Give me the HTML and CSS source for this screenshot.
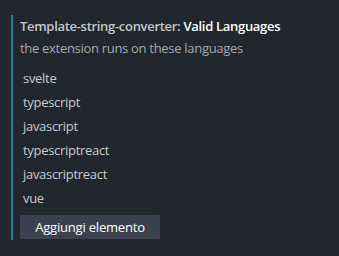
FILE: index.html
```html
<!DOCTYPE html>
<html lang="it">
<head>
  <meta charset="UTF-8">
  <meta name="viewport" content="width=device-width, initial-scale=1.0">
  <title>Settings</title>
  <link rel="stylesheet" href="styles.css">
</head>
<body>
  <div class="setting-item">
    <div class="setting-title">
      <span class="category">Template-string-converter: </span><span class="label">Valid Languages</span>
    </div>
    <div class="setting-description">the extension runs on these languages</div>

    <ul class="list">
      <li>svelte</li>
      <li>typescript</li>
      <li>javascript</li>
      <li>typescriptreact</li>
      <li>javascriptreact</li>
      <li>vue</li>
    </ul>

    <button type="button" class="add-button">Aggiungi elemento</button>
  </div>
</body>
</html>
```

FILE: styles.css
```css
body {
  margin: 0;
  background-color: #22262d;
  font-family: 'Open Sans', 'Noto Sans', sans-serif;
  font-size: 13px;
  letter-spacing: -0.3px;
  padding: 15px 0 14px 11px;
}

.setting-item {
  border-left: 2px solid #1a80a6;
  padding: 2px 0 1px 7px;
}

.setting-title {
  height: 18px;
  line-height: 18px;
  font-weight: 600;
  color: #c3c6cb;
}

.setting-title .label {
  color: #ffffff;
}

.setting-description {
  margin-top: 4px;
  height: 18px;
  line-height: 18px;
  color: #a5a9b0;
}

.list {
  list-style: none;
  margin: 9px 0 0;
  padding: 0;
}

.list li {
  height: 24px;
  line-height: 24px;
  padding-left: 3px;
  color: #c8cbd0;
}

.add-button {
  margin-top: 5px;
  width: 140px;
  height: 24px;
  border: none;
  border-radius: 2px;
  background-color: #3c4150;
  color: #ffffff;
  font-family: inherit;
  font-size: 13px;
  letter-spacing: -0.2px;
  padding: 0;
}
```
